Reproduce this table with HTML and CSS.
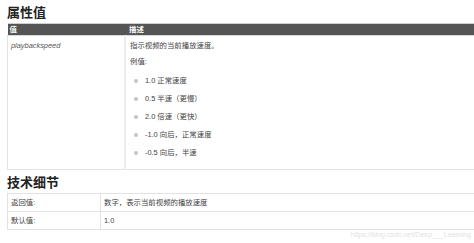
FILE: index.html
```html
<!DOCTYPE html>
<html lang="zh-CN">
<head>
<meta charset="utf-8">
<link rel="stylesheet" href="styles.css">
</head>
<body>
<div class="page">
  <h2 class="title">属性值</h2>
  <table class="ref ref-values">
    <thead>
      <tr><th class="col-a">值</th><th>描述</th></tr>
    </thead>
    <tbody>
      <tr>
        <td class="col-a"><i>playbackspeed</i></td>
        <td>
          <p class="line">指示视频的当前播放速度。</p>
          <p class="line line-gap">例值:</p>
          <ul class="examples">
            <li>1.0 正常速度</li>
            <li>0.5 半速（更慢）</li>
            <li>2.0 倍速（更快）</li>
            <li>-1.0 向后，正常速度</li>
            <li>-0.5 向后，半速</li>
          </ul>
        </td>
      </tr>
    </tbody>
  </table>

  <h2 class="title title-second">技术细节</h2>
  <table class="ref ref-tech">
    <tbody>
      <tr><td class="col-b">返回值:</td><td>数字，表示当前视频的播放速度</td></tr>
      <tr><td class="col-b">默认值:</td><td>1.0</td></tr>
    </tbody>
  </table>
</div>
<div class="watermark">https://blog.csdn.net/Deep___Learning</div>
</body>
</html>
```
FILE: styles.css
```css
html, body {
  margin: 0;
  padding: 0;
  background: #ffffff;
  overflow: hidden;
}
body {
  width: 474px;
  height: 243px;
  position: relative;
  font-family: "Liberation Sans", Arial, "Noto Sans CJK SC", sans-serif;
  color: #444;
}
.page {
  padding-left: 7px;
}
.title {
  margin: 0;
  padding-top: 3px;
  font-size: 13px;
  line-height: 18px;
  font-weight: bold;
  color: #222;
  font-family: "Noto Sans CJK SC", sans-serif;
}
.title-second {
  margin-top: 1px;
  padding-top: 2px;
}
.ref {
  border-collapse: collapse;
  width: 480px;
  margin-top: 2px;
  font-size: 7.4px;
  line-height: 10px;
}
.ref th {
  background: #555555;
  color: #ffffff;
  text-align: left;
  font-weight: bold;
  height: 11px;
  padding: 0 0 0 2px;
  border-top: 1px solid #cfcfcf;
  border-bottom: 1px solid #d8d8d8;
  vertical-align: middle;
}
.ref th + th {
  padding-left: 4px;
}
.ref td {
  vertical-align: top;
  border: 1px solid #e2e2e2;
  padding: 0 0 0 3px;
}
.ref-values td {
  padding-top: 5px;
  padding-bottom: 11px;
}
.ref-values td + td {
  padding-left: 4px;
  border-left: 2px solid #ececec;
}
.col-a {
  width: 113px;
}
.col-a i {
  color: #555;
}
.line {
  margin: 0;
}
.line-gap {
  margin-top: 6px;
}
.examples {
  list-style: none;
  margin: 9px 0 0 0;
  padding: 0 0 0 15px;
}
.examples li {
  position: relative;
  margin-bottom: 8px;
}
.examples li:last-child {
  margin-bottom: 0;
}
.examples li::before {
  content: "";
  position: absolute;
  left: -11px;
  top: 3px;
  width: 4px;
  height: 4px;
  border-radius: 50%;
  background: #c4c4c4;
}
.ref-tech td {
  height: 17px;
  vertical-align: middle;
  padding-top: 0;
  padding-bottom: 0;
}
.col-b {
  width: 89px;
}
.watermark {
  position: absolute;
  right: 3px;
  top: 230px;
  font-size: 7px;
  line-height: 10px;
  color: #e2e2e2;
  font-family: "Liberation Sans", Arial, sans-serif;
}
```
